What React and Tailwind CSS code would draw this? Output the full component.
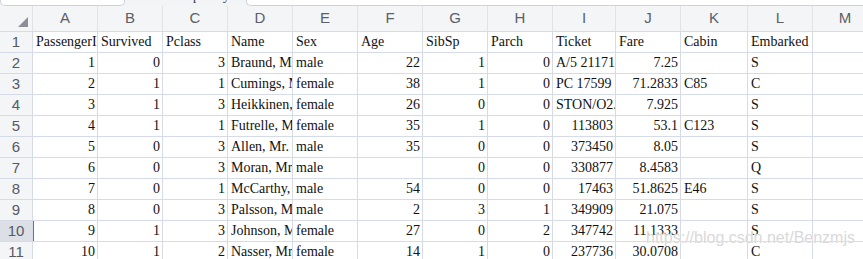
import React from 'react';

const colWidths = ['w-[65px]', 'w-[65px]', 'w-[65px]', 'w-[65px]', 'w-[65px]', 'w-[65px]', 'w-[65px]', 'w-[65px]', 'w-[63px]', 'w-[65px]', 'w-[67px]', 'w-[65px]', 'w-[65px]'];
const letters = ['A', 'B', 'C', 'D', 'E', 'F', 'G', 'H', 'I', 'J', 'K', 'L', 'M'];

const header = ['PassengerId', 'Survived', 'Pclass', 'Name', 'Sex', 'Age', 'SibSp', 'Parch', 'Ticket', 'Fare', 'Cabin', 'Embarked', ''];

// numbers are right aligned, strings left aligned
const rows = [
  [1, 0, 3, 'Braund, Mr. Owen Harris', 'male', 22, 1, 0, 'A/5 21171', 7.25, '', 'S', ''],
  [2, 1, 1, 'Cumings, Mrs. John Bradley', 'female', 38, 1, 0, 'PC 17599', 71.2833, 'C85', 'C', ''],
  [3, 1, 3, 'Heikkinen, Miss. Laina', 'female', 26, 0, 0, 'STON/O2. 3101282', 7.925, '', 'S', ''],
  [4, 1, 1, 'Futrelle, Mrs. Jacques Heath', 'female', 35, 1, 0, 113803, 53.1, 'C123', 'S', ''],
  [5, 0, 3, 'Allen, Mr. William Henry', 'male', 35, 0, 0, 373450, 8.05, '', 'S', ''],
  [6, 0, 3, 'Moran, Mr. James', 'male', '', 0, 0, 330877, 8.4583, '', 'Q', ''],
  [7, 0, 1, 'McCarthy, Mr. Timothy J', 'male', 54, 0, 0, 17463, 51.8625, 'E46', 'S', ''],
  [8, 0, 3, 'Palsson, Master. Gosta Leonard', 'male', 2, 3, 1, 349909, 21.075, '', 'S', ''],
  [9, 1, 3, 'Johnson, Mrs. Oscar W', 'female', 27, 0, 2, 347742, 11.1333, '', 'S', ''],
  [10, 1, 2, 'Nasser, Mrs. Nicholas', 'female', 14, 1, 0, 237736, 30.0708, '', 'C', ''],
];

const Cell = ({ value, width, marked }) => {
  const isNum = typeof value === 'number';
  return (
    <div
      className={`${width} h-[21px] shrink-0 border-r border-b border-[#d6dbe8] flex items-center overflow-hidden whitespace-nowrap relative ${isNum ? 'justify-end pr-[2px]' : 'pl-[3px]'}`}
    >
      {marked && <div className="absolute left-[-1px] top-0 bottom-[-1px] w-[2px] bg-[#20a162]" />}
      <span className="leading-none">{value}</span>
    </div>
  );
};

const RowHead = ({ n, selected }) => (
  <div
    className={`w-[33px] h-[21px] shrink-0 border-r border-b border-[#d6dbe8] flex items-center justify-center text-[15px] text-[#555a64] ${selected ? 'bg-[#dcdfe5]' : 'bg-[#f4f5f7]'}`}
    style={{ fontFamily: '"Liberation Sans", Arial, sans-serif' }}
  >
    {n}
  </div>
);

export default function App() {
  return (
    <div className="w-[863px] h-[259px] overflow-hidden bg-white relative text-[14px] text-[#111]" style={{ fontFamily: '"Liberation Serif", "Times New Roman", serif' }}>
      {/* tab strip, only the bottom edge is visible */}
      <div className="h-[6px] bg-[#f3f4f6] flex relative overflow-hidden">
        <div className="w-[125px] h-[6px] bg-white border-x border-b border-[#cfd2d8] rounded-b-[5px]" />
        <div className="w-[121px] relative">
          <span className="absolute left-[68px] top-[-11px] text-[13px] leading-[13px] text-[#333]">p</span>
          <span className="absolute left-[98px] top-[-11px] text-[13px] leading-[13px] text-[#333]">y</span>
        </div>
        <div className="flex-1 h-[6px] bg-white border-l border-b border-[#cfd2d8] rounded-bl-[5px]" />
      </div>

      {/* column letters */}
      <div className="flex h-[26px] bg-[#f4f5f7] border-b border-[#d6dbe8]" style={{ fontFamily: '"Liberation Sans", Arial, sans-serif' }}>
        <div className="w-[33px] shrink-0 border-r border-[#e1e3e8] relative">
          <svg className="absolute left-[18px] top-[11px]" width="10" height="10" viewBox="0 0 10 10">
            <polygon points="10,0 10,10 0,10" fill="#8c8f95" />
          </svg>
        </div>
        {letters.map((l, i) => (
          <div key={l} className={`${colWidths[i]} shrink-0 border-r border-[#e1e3e8] flex items-center justify-center text-[15px] text-[#5a5f69]`}>
            {l}
          </div>
        ))}
      </div>

      {/* row 1: field names */}
      <div className="flex">
        <RowHead n={1} />
        {header.map((h, i) => (
          <Cell key={i} value={h} width={colWidths[i]} />
        ))}
      </div>

      {rows.map((r, ri) => (
        <div key={ri} className="flex">
          <RowHead n={ri + 2} selected={ri === 8} />
          {r.map((v, ci) => (
            <Cell key={ci} value={v} width={colWidths[ci]} marked={ri === 8 && ci === 0} />
          ))}
        </div>
      ))}

      {/* watermark */}
      <div
        className="absolute left-[646px] top-[226px] text-[16px] text-[#d9d9d9] pointer-events-none"
        style={{ fontFamily: '"Liberation Sans", Arial, sans-serif', textShadow: '0 0 1px #fff' }}
      >
        https://blog.csdn.net/Benzmjs
      </div>
    </div>
  );
}
